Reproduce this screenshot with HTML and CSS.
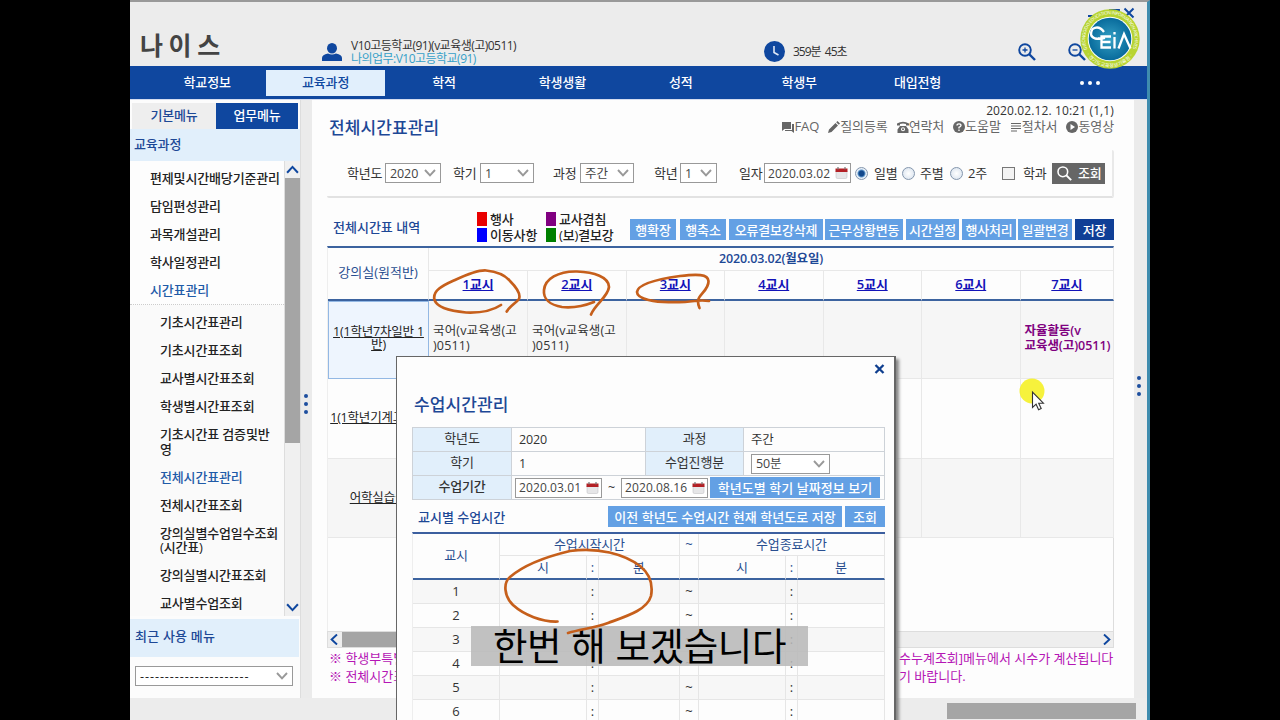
FILE: index.html
```html
<!DOCTYPE html>
<html lang="ko">
<head>
<meta charset="utf-8">
<title>나이스</title>
<link rel="stylesheet" href="styles.css">
</head>
<body>
<svg width="0" height="0" class="defs" aria-hidden="true">
  <symbol id="chev" viewBox="0 0 12 8"><path d="M1 1l5 5.4L11 1" fill="none" stroke="currentColor" stroke-width="1.9"/></symbol>
  <symbol id="cal" viewBox="0 0 13 12"><path d="M1 4h11v6q0 1.500-1.500 1.500h-8Q1 11.500 1 10z" fill="#e6e6e8" stroke="#c4c4c8" stroke-width=".6"/><path d="M.5 1.500h12V5H.5z" fill="#b32025"/><path d="M3 0v2.500M10 0v2.500" stroke="#777" stroke-width="1.200"/></symbol>
  <symbol id="mag" viewBox="0 0 18 18"><circle cx="7" cy="7" r="5.800" fill="none" stroke="currentColor" stroke-width="1.900"/><path d="M11 11l6 6" stroke="currentColor" stroke-width="2.400"/></symbol>
  <symbol id="cross" viewBox="0 0 10 10"><path d="M1 1l8 8M9 1L1 9" stroke="currentColor" stroke-width="2.300"/></symbol>
</svg>
<div class="app">
  <header class="top">
    <div class="brand">나이스</div>
    <svg class="usericon" viewBox="0 0 20 18"><ellipse cx="10" cy="5.300" rx="5" ry="5.300"/><path d="M0 18v-3q0-3.500 6-4.500 4 2 8 0 6 1 6 4.500v3z"/></svg>
    <div class="user"><div>V10고등학교(91)(v교육생(고)0511)</div><div class="job">나의업무:V10고등학교(91)</div></div>
    <svg class="clock" viewBox="0 0 21 21"><circle cx="10.500" cy="10.500" r="10.500" fill="#0f479f"/><path d="M10 5v6.500l4.500 2.500" fill="none" stroke="#dfe8f6" stroke-width="1.600"/></svg>
    <div class="remain">359분&nbsp; 45초</div>
    <svg class="zoomin" viewBox="0 0 18 18"><use href="#mag"/><path d="M4.500 7h5M7 4.500v5" stroke="currentColor" stroke-width="1.300"/></svg>
    <svg class="zoomout" viewBox="0 0 18 18"><use href="#mag"/><path d="M4.500 7h5" stroke="currentColor" stroke-width="1.300"/></svg>
    <svg class="win" viewBox="0 0 50 12"><path d="M1 9h8M23 3h9v7h-9z" fill="none" stroke="currentColor" stroke-width="1.800"/><path d="M37.500 1.500l9 9M46.500 1.500l-9 9" stroke="currentColor" stroke-width="2"/></svg>
  </header>
  <nav class="nav"><span>학교정보</span><span class="on">교육과정</span><span>학적</span><span>학생생활</span><span>성적</span><span>학생부</span><span>대입전형</span><i class="more"><b></b><b></b><b></b></i></nav>
  <div class="body">
    <aside class="side">
      <div class="tabs"><span>기본메뉴</span><span class="on">업무메뉴</span></div>
      <div class="sidehead">교육과정</div>
      <div class="menuwrap">
        <div class="menu">
          <ul class="l1"><li>편제및시간배당기준관리</li><li>담임편성관리</li><li>과목개설관리</li><li>학사일정관리</li><li class="cur">시간표관리</li></ul>
          <ul class="l2"><li>기초시간표관리</li><li>기초시간표조회</li><li>교사별시간표조회</li><li>학생별시간표조회</li><li>기초시간표 검증및반<br>영</li><li class="cur">전체시간표관리</li><li>전체시간표조회</li><li>강의실별수업일수조회<br>(시간표)</li><li>강의실별시간표조회</li><li>교사별수업조회</li></ul>
        </div>
        <div class="vbar"><svg class="up"><use href="#chev"/></svg><div class="thumb"></div><svg class="down"><use href="#chev"/></svg></div>
      </div>
      <div class="recent">최근 사용 메뉴</div>
      <div class="select recentsel"><span>----------------------</span><svg><use href="#chev"/></svg></div>
    </aside>
    <div class="split left"><i></i><i></i><i></i></div>
    <main class="main">
      <div class="head">
        <h1>전체시간표관리</h1>
        <div class="headr">
          <div class="now">2020.02.12. 10:21 (1,1)</div>
          <div class="links">
            <span><svg viewBox="0 0 12 12"><path d="M0 1h9v7H2.500L0 10zM10 3h2v9l-2.500-2H3V9h7z"/></svg>FAQ</span>
            <span><svg viewBox="0 0 12 12"><path d="M0 12l1-3.500 6.500-6.500 2.500 2.500L3.500 11zM8.200 1.200L9.500 0 12 2.500l-1.200 1.200z"/></svg>질의등록</span>
            <span><svg viewBox="0 0 12 12"><path d="M0 4V2.500Q6-1 12 2.500V4.500H9V3Q6 2 3 3v1.500H0zM3 5h6l2.500 3.500V12H.5V8.500z"/><circle cx="6" cy="8.300" r="2" fill="#fff"/><circle cx="6" cy="8.300" r="1"/></svg>연락처</span>
            <span><svg viewBox="0 0 12 12"><circle cx="6" cy="6" r="6"/><path d="M4 4.600Q4 2.800 6 2.800t2 1.700Q8 5.500 6 6.300V7.500M6 8.500V10" fill="none" stroke="#fff" stroke-width="1.300"/></svg>도움말</span>
            <span><svg viewBox="0 0 12 12"><path d="M1 2h10v1H1zM1 4.500h10v1H1zM1 7h10v1H1zM1 9.500h6v1H1z"/></svg>절차서</span>
            <span><svg viewBox="0 0 12 12"><circle cx="6" cy="6" r="6"/><path d="M4.500 3l4.500 3-4.500 3z" fill="#fff"/></svg>동영상</span>
          </div>
        </div>
      </div>
      <div class="filter">
        <label style="width:38px">학년도</label><div class="select" style="width:56px"><span>2020</span><svg><use href="#chev"/></svg></div>
        <label style="width:27px;margin-left:12px">학기</label><div class="select" style="width:54px"><span>1</span><svg><use href="#chev"/></svg></div>
        <label style="width:27px;margin-left:19px">과정</label><div class="select" style="width:54px"><span>주간</span><svg><use href="#chev"/></svg></div>
        <label style="width:26px;margin-left:20px">학년</label><div class="select" style="width:37px"><span>1</span><svg><use href="#chev"/></svg></div>
        <label style="width:25px;margin-left:22px">일자</label><div class="date"><span>2020.03.02</span><svg><use href="#cal"/></svg></div>
        <i class="radio on"></i><label style="width:28px">일별</label>
        <i class="radio"></i><label style="width:30px">주별</label>
        <i class="radio"></i><label style="width:34px">2주</label>
        <i class="check"></i><label style="width:29px">학과</label>
        <button class="search"><svg><use href="#mag"/></svg>조회</button>
      </div>
      <div class="bar">
        <h2>전체시간표 내역</h2>
        <div class="legend"><span><i class="red"></i>행사</span><span><i class="purple"></i>교사겹침</span><span><i class="blue"></i>이동사항</span><span><i class="green"></i>(보)결보강</span></div>
        <div class="btns"><button style="width:46px;margin-right:4px">행확장</button><button style="width:46px;margin-right:3px">행축소</button><button style="width:94px;margin-right:2px">오류결보강삭제</button><button style="width:78px;margin-right:3px">근무상황변동</button><button style="width:53px;margin-right:3px">시간설정</button><button style="width:54px;margin-right:2px">행사처리</button><button style="width:54px;margin-right:3px">일괄변경</button><button class="dark" style="width:39px">저장</button></div>
      </div>
      <div class="tt">
        <div class="room hd">강의실(원적반)</div><div class="day">2020.03.02(월요일)</div>
        <div class="p">1교시</div><div class="p">2교시</div><div class="p">3교시</div><div class="p">4교시</div><div class="p">5교시</div><div class="p">6교시</div><div class="p">7교시</div>
        <div class="room sel">1(1학년7차일반 1<br>반)</div><div class="c g">국어(v교육생(고<br>)0511)</div><div class="c g">국어(v교육생(고<br>)0511)</div><div class="c g"></div><div class="c g"></div><div class="c g"></div><div class="c g"></div><div class="c g act">자율활동(v<br>교육생(고)0511)</div>
        <div class="room">1(1학년기계고1반)</div><div class="c"></div><div class="c"></div><div class="c"></div><div class="c"></div><div class="c"></div><div class="c"></div><div class="c"></div>
        <div class="room g">어학실습실</div><div class="c g"></div><div class="c g"></div><div class="c g"></div><div class="c g"></div><div class="c g"></div><div class="c g"></div><div class="c g"></div>
      </div>
      <div class="hbar"><svg class="lt"><use href="#chev"/></svg><div class="thumb"></div><svg class="rt"><use href="#chev"/></svg></div>
      <div class="notes"><span>※ 학생부특별</span><span>수누계조회]메뉴에서 시수가 계산됩니다</span><span>※ 전체시간표</span><span>기 바랍니다.</span></div>
    </main>
    <div class="split right"><i></i><i></i><i></i></div>
  </div>
  <footer class="foot"><div></div></footer>
</div>

<section class="modal">
  <svg class="close"><use href="#cross"/></svg>
  <h1>수업시간관리</h1>
  <div class="info">
    <div class="k">학년도</div><div class="v">2020</div><div class="k">과정</div><div class="v">주간</div>
    <div class="k">학기</div><div class="v">1</div><div class="k">수업진행분</div><div class="v"><div class="select"><span>50분</span><svg><use href="#chev"/></svg></div></div>
    <div class="k strong">수업기간</div><div class="v wide"><div class="date"><span>2020.03.01</span><svg><use href="#cal"/></svg></div><em>~</em><div class="date"><span>2020.08.16</span><svg><use href="#cal"/></svg></div><button>학년도별 학기 날짜정보 보기</button></div>
  </div>
  <div class="msec"><h2>교시별 수업시간</h2><button style="width:234px">이전 학년도 수업시간 현재 학년도로 저장</button><button style="width:40px">조회</button></div>
  <div class="times">
    <div class="h a">교시</div><div class="h b">수업시작시간</div><div class="h">~</div><div class="h b">수업종료시간</div>
    <div class="h s">시</div><div class="h s">:</div><div class="h s">분</div><div class="h s"></div><div class="h s">시</div><div class="h s">:</div><div class="h s">분</div>
    <div class="g">1</div><div class="g"></div><div class="g">:</div><div class="g"></div><div class="g">~</div><div class="g"></div><div class="g">:</div><div class="g"></div>
    <div>2</div><div></div><div>:</div><div></div><div>~</div><div></div><div>:</div><div></div>
    <div class="g">3</div><div class="g"></div><div class="g">:</div><div class="g"></div><div class="g">~</div><div class="g"></div><div class="g">:</div><div class="g"></div>
    <div>4</div><div></div><div>:</div><div></div><div>~</div><div></div><div>:</div><div></div>
    <div class="g">5</div><div class="g"></div><div class="g">:</div><div class="g"></div><div class="g">~</div><div class="g"></div><div class="g">:</div><div class="g"></div>
    <div>6</div><div></div><div>:</div><div></div><div>~</div><div></div><div>:</div><div></div>
  </div>
</section>

<div class="caption">한번 해 보겠습니다</div>
<svg class="ink" viewBox="0 0 1280 720">
  <g fill="none" stroke="#c65f1b" stroke-width="2.700" stroke-linecap="round" stroke-linejoin="round">
    <path d="M501 305C492 311 478 313 466 312.500C450 311 437 307 434.500 300C432 290 444 285 455 280C468 274 478 270 486 270.500C500 272 506 276 510 281C516 287 521 294 519 299C516 303 510 306 506.700 311.500"/>
    <path d="M594 302C584 306 572 308 562 307C550 305 543 299 544 290C545 279 558 271 577 271.500C594 272 609 277 609 287C608 297 595 304 591 314.500"/>
    <path d="M709 301C696 299 690 303 675 302C655 303 637 299 637 292C638 284 658 279 680 276C697 274 708 274 708.500 281C709 290 698 295 698 301Q698 305 699.500 308"/>
    <path d="M557.500 621.500C542 622 524 615 513 605C504 596 503 583 510 577C525 564 549 556 570 551C598 547 624 554 640 566C650 574 653 585 651 596C647 610 627 616 608 623C594 628 582 629 568 633"/>
  </g>
  <circle cx="1032" cy="391" r="12.500" fill="#f4f01a" opacity=".85"/>
  <path d="M1032.500 392v15.500l3.600-3.300 2.500 5.500 2.600-1.200-2.500-5.300h4.700z" fill="#fff" stroke="#333" stroke-width="1.100"/>
  <defs>
    <radialGradient id="sea"><stop offset="0" stop-color="#35a0c4"/><stop offset="1" stop-color="#086b9c"/></radialGradient>
    <path id="arcTop" d="M1087.500 49.500A24.800 24.800 0 1 1 1132.500 49.500"/>
    <path id="arcBottom" d="M1085 52A28.200 28.200 0 0 0 1135 52"/>
  </defs>
  <circle cx="1110" cy="39" r="29.700" fill="#b8d432"/>
  <circle cx="1110" cy="39" r="22.300" fill="#fff"/>
  <circle cx="1110" cy="39" r="21.300" fill="url(#sea)"/>
  <text class="ring"><textPath href="#arcTop" textLength="98">GYEONGGIDO EDUCATION INFORMATION ARCHIVES</textPath></text>
  <text class="ring ko"><textPath href="#arcBottom" startOffset="3" textLength="54">· 경기도교육정보기록원 ·</textPath></text>
  <path d="M1104 32Q1099 25 1092.500 29Q1088.500 36 1095 38.500Q1100 39.500 1105 38M1111 36.500h-9.500v11h9.500M1101.500 42h9M1114.500 37v11.500M1114.500 32v2.500M1118.500 48.500l5.500-14.500 6.500 14.500M1098 38.500h4" fill="none" stroke="#fff" stroke-width="2.300"/>
</svg>
</body>
</html>
```
FILE: styles.css
```css
* { box-sizing: border-box; }
body { margin: 0; width: 1280px; height: 720px; overflow: hidden; background: #000; position: relative; font: 13px/15px "Open Sans", "Noto Sans CJK KR", sans-serif; letter-spacing: -.15px; color: #333; }
h1, h2, ul { margin: 0; padding: 0; list-style: none; }
button { border: 0; padding: 0; height: 21px; background: #63a0e4; color: #fff; font: 500 13px/20px "Open Sans", "Noto Sans CJK KR", sans-serif; letter-spacing: -.15px; white-space: nowrap; flex: none; }
.defs { display: none; }
.app { width: 1020px; height: 720px; margin-left: 130px; background: #ececec; border-right: 3px solid #3f8cae; border-top: 2px solid #999; display: flex; flex-direction: column; }

.top { height: 64px; display: flex; align-items: flex-start; color: #0f479f; position: relative; flex: none; }
.brand { margin: 26px 0 0 10px; width: 182px; font-size: 25px; line-height: 34px; font-weight: 700; letter-spacing: 5.6px; color: #444; }
.usericon { width: 20px; height: 18px; margin-top: 41px; fill: #0f479f; }
.user { margin: 37px 0 0 9px; width: 413px; font-size: 12px; line-height: 13px; color: #333; letter-spacing: -.52px; }
.job { color: #35a0c8; }
.clock { width: 21px; height: 21px; margin-top: 39px; }
.remain { margin: 42px 0 0 8px; width: 225px; font-size: 12px; letter-spacing: -1px; color: #333; }
.zoomin, .zoomout { width: 18px; height: 18px; margin-top: 41px; }
.zoomout { margin-left: 32px; }
.win { position: absolute; left: 957px; top: 5px; width: 50px; height: 12px; }

.nav { height: 33px; background: #0f479f; padding: 4px 0 3px 18px; display: flex; flex: none; color: #fff; font-weight: 500; }
.nav span { width: 118.4px; text-align: center; line-height: 24px; }
.nav .on { background: #e1effc; color: #0f479f; }
.more { display: flex; gap: 4px; align-items: center; margin-left: 103px; }
.more b { width: 4px; height: 4px; border-radius: 50%; background: #fff; }

.body { height: 599px; display: flex; flex: none; border-top: 1px solid #d5dcef; background: #fdfdfd; }
.side { width: 171px; padding-top: 3px; font-weight: 500; background: #fcfcfc; border-right: 1px solid #ddd; }
.tabs { display: flex; height: 26px; margin-left: 2px; color: #1d4896; }
.tabs span { width: 84px; background: #eee; text-align: center; line-height: 24px; }
.tabs .on { width: 82px; background: #0f479f; color: #fff; }
.sidehead { height: 32px; background: #e1effb; color: #1d4896; padding-left: 4px; line-height: 30px; }
.menuwrap { height: 455px; display: flex; justify-content: space-between; color: #222; }
.menu { width: 155px; background: #fafafa; line-height: 14.5px; white-space: nowrap; }
.menu li { margin-bottom: 13.5px; }
.l1 { padding: 10px 0 0 20px; height: 144px; background: #fdfdfd; border-bottom: 1px dotted #ccc; }
.l2 { padding: 10px 0 0 30px; }
.menu .cur { color: #1f5ba8; }
.vbar { width: 16px; background: #f0f0f0; display: flex; flex-direction: column; align-items: center; color: #0f479f; border-left: 1px solid #ddd; }
.vbar svg { width: 13px; height: 9px; margin: 4px 0; }
.up { transform: scaleY(-1); }
.vbar .thumb { width: 15px; height: 265px; background: #a5a5a5; margin-bottom: auto; }
.recent { height: 38px; margin: 3px 1px 0 0; background: #e1effb; color: #1d4896; padding-left: 5px; line-height: 35px; letter-spacing: .2px; }

.select, .date { height: 20px; border: 1px solid #999; background: #fff; display: flex; align-items: center; justify-content: space-between; padding: 0 4px 0 4px; color: #444; font-size: 12.5px; letter-spacing: -.1px; flex: none; font-weight: 400; }
.select svg { width: 12px; height: 8px; color: #999; }
.date { width: 87px; font-size: 12px; padding: 0 2px 0 3px; letter-spacing: .1px; }
.date svg { width: 13px; height: 12px; }
.recentsel { width: 158px; margin: 9px 0 0 5px; color: #222; letter-spacing: .95px; }

.split { background: #ebebeb; display: flex; flex-direction: column; gap: 4px; flex: none; }
.split i { width: 4px; height: 4px; border-radius: 50%; background: #1d4f9f; }
.left { width: 11px; padding: 294px 0 0 3px; }
.right { width: 13px; padding: 276px 0 0 3px; }
.main { width: 822px; padding: 0 20px 0 15px; position: relative; }
.head { height: 50px; padding-left: 2px; display: flex; justify-content: space-between; align-items: flex-start; }
.main h1, .modal h1 { font-size: 17px; line-height: 24px; font-weight: 500; color: #1d4896; letter-spacing: .1px; }
.main h1 { margin-top: 16px; }
.headr { margin-top: 3px; display: flex; flex-direction: column; align-items: flex-end; }
.now { font-size: 12px; letter-spacing: .12px; }
.links { display: flex; gap: 9px; color: #666; margin-top: 1px; }
.links span { display: flex; align-items: center; font-size: 13px; letter-spacing: -.1px; }
.links svg { width: 12px; height: 12px; fill: #666; }
.filter { width: 787px; height: 48px; padding-left: 20px; display: flex; align-items: center; border-bottom: 2px solid #e2e2e2; border-right: 2px solid #e9e9e9; border-radius: 2px; }
.filter label { white-space: nowrap; flex: none; }
.radio { width: 13px; height: 13px; border-radius: 50%; border: 1px solid #8496ad; background: radial-gradient(#fff, #d4dfec); margin: 0 5px 0 0; flex: none; }
.radio.on { background: radial-gradient(circle, #12488c 0 2.5px, #5e96ca 3.5px, #e8f0f8 4.5px); margin: 0 6px 0 4px; }
.check { width: 13px; height: 13px; border: 1px solid #777; background: #f3f3f3; margin-right: 8px; flex: none; }
.search { width: 53px; background: #666; display: flex; align-items: center; gap: 6px; padding-left: 5px; }
.search svg { width: 15px; height: 15px; }
.bar { display: flex; height: 48px; }
.main h2, .msec h2 { font-size: 13px; font-weight: 500; line-height: 20px; color: #1d4896; letter-spacing: 0; }
.main h2 { width: 150px; padding-left: 6px; margin-top: 19px; }
.legend { width: 153px; margin-top: 13px; display: grid; grid-template-columns: 69px 84px; grid-auto-rows: 16px; font-weight: 500; white-space: nowrap; color: #222; align-items: center; }
.legend span { display: flex; gap: 3px; align-items: center; line-height: 14px; height: 15px; }
.legend i { width: 10px; height: 14px; }
.red { background: #e90000; } .purple { background: #800080; } .blue { background: #00f; } .green { background: #008000; }
.btns { display: flex; margin-top: 21px; }
.dark { background: #0f3f96; }

.tt { width: 787px; height: 385px; display: grid; grid-template-columns: 101px 99px 98.5px 98.5px 98.5px 98.5px 98.5px 93.5px; grid-template-rows: 23px 30px 78px 80px 79px; border-top: 2px solid #3c639f; border-right: 1px solid #ddd; border-left: 1px solid #eee; }
.tt > div { border-right: 1px solid #e8e8e8; border-bottom: 1px solid #e8e8e8; display: flex; align-items: center; }
.tt .room { justify-content: center; text-align: center; text-decoration: underline; color: #222; font-size: 12.5px; line-height: 13px; letter-spacing: -.2px; white-space: nowrap; padding-bottom: 2px; }
.tt .hd { grid-row: span 2; text-decoration: none; color: #2a4f90; border-bottom: 2px solid #3c639f; font-size: 13px; letter-spacing: 0; }
.tt .day { grid-column: span 7; justify-content: center; color: #1d4896; font-weight: 600; font-size: 12.5px; padding-bottom: 1px; }
.tt .p { justify-content: center; text-decoration: underline; color: #1212b8; font-weight: 600; border-bottom: 2px solid #3c639f; padding-bottom: 1px; }
.tt .sel { background: #eef5fe; border: 1px solid #93b8e4; padding-bottom: 5px; }
.tt .g { background: #f6f6f6; }
.tt .c { padding: 0 0 4px 4px; white-space: nowrap; letter-spacing: .15px; font-size: 12.5px; }
.tt .act { color: #800080; font-weight: 600; letter-spacing: -.05px; }
.hbar { width: 787px; height: 17px; background: #eee; border: 1px solid #ddd; display: flex; align-items: center; justify-content: space-between; color: #0f479f; }
.hbar svg { width: 12px; height: 9px; }
.lt { transform: rotate(90deg); } .rt { transform: rotate(-90deg); }
.hbar .thumb { width: 400px; height: 15px; background: #a5a5a5; margin: 0 auto 0 2px; }
.notes { display: grid; grid-template-columns: 570px 216px; grid-auto-rows: 18px; padding: 1px 0 0 2px; line-height: 18px; color: #b516b5; white-space: nowrap; letter-spacing: 0; }
.foot { flex: 1; padding: 5px 11px 0 0; display: flex; justify-content: flex-end; }
.foot div { width: 189px; height: 16px; background: #a5a5a5; }

.modal { position: absolute; left: 396px; top: 356px; width: 500px; height: 370px; background: #fdfdfd; border: 1px solid #666; border-right-width: 2px; box-shadow: 3px 3px 3px #888; padding: 0 9px 0 15px; }
.close { position: absolute; right: 9px; top: 7px; width: 11px; height: 10px; color: #0f3f8f; }
.modal h1 { margin: 36px 0 10px 2px; }
.info { display: grid; width: 473px; grid-template-columns: 99px 134px 98px 141px; grid-template-rows: repeat(3, 24px); border: 1px solid #cdd2d8; border-width: 1px 0 0 1px; }
.info > div { border: 1px solid #cdd2d8; border-width: 0 1px 1px 0; display: flex; align-items: center; white-space: nowrap; }
.info .k { background: #e1effb; justify-content: center; padding-bottom: 2px; }
.strong { font-weight: 500; }
.info .v { padding-left: 7px; font-size: 12.5px; }
.info .wide { grid-column: span 3; padding-left: 3px; }
.info .select { width: 79px; }
.wide em { width: 19px; text-align: center; font-style: normal; }
.info button { width: 170px; margin-left: 2px; letter-spacing: .05px; }
.msec { display: flex; gap: 3px; margin-top: 6px; height: 26px; width: 473px; }
.msec button { letter-spacing: .05px; }
.msec h2 { padding-left: 6px; margin-right: auto; line-height: 22px; }
.times { display: grid; width: 473px; grid-template-columns: 87px 87px 12px 81px 19px 87px 12px 87px; grid-template-rows: 22px 24px repeat(6, 24px); border-top: 2px solid #3c5f9f; border-left: 1px solid #eee; text-align: center; }
.times > div { border-right: 1px solid #e6e6e6; border-bottom: 1px solid #e6e6e6; line-height: 22px; }
.times .h { color: #2a4f90; line-height: 20px; }
.times .a { grid-row: span 2; line-height: 42px; border-bottom: 2px solid #3c639f; }
.times .b { grid-column: span 3; }
.times .s { border-bottom: 2px solid #3c639f; line-height: 22px; }
.times .g { background: #f7f7f7; }

.caption { position: absolute; left: 471px; top: 626px; width: 337px; height: 40px; background: rgba(185, 185, 185, .88); color: #000; font: 37.5px/36px "Noto Sans CJK KR", sans-serif; letter-spacing: -.4px; padding-left: 22px; white-space: nowrap; }
.ink { position: absolute; left: 0; top: 0; width: 1280px; height: 720px; }
.ring { font: 4.5px "Open Sans", sans-serif; fill: #fff; letter-spacing: 0; }
.ko { font-size: 4.8px; font-family: "Noto Sans CJK KR", sans-serif; }
```
